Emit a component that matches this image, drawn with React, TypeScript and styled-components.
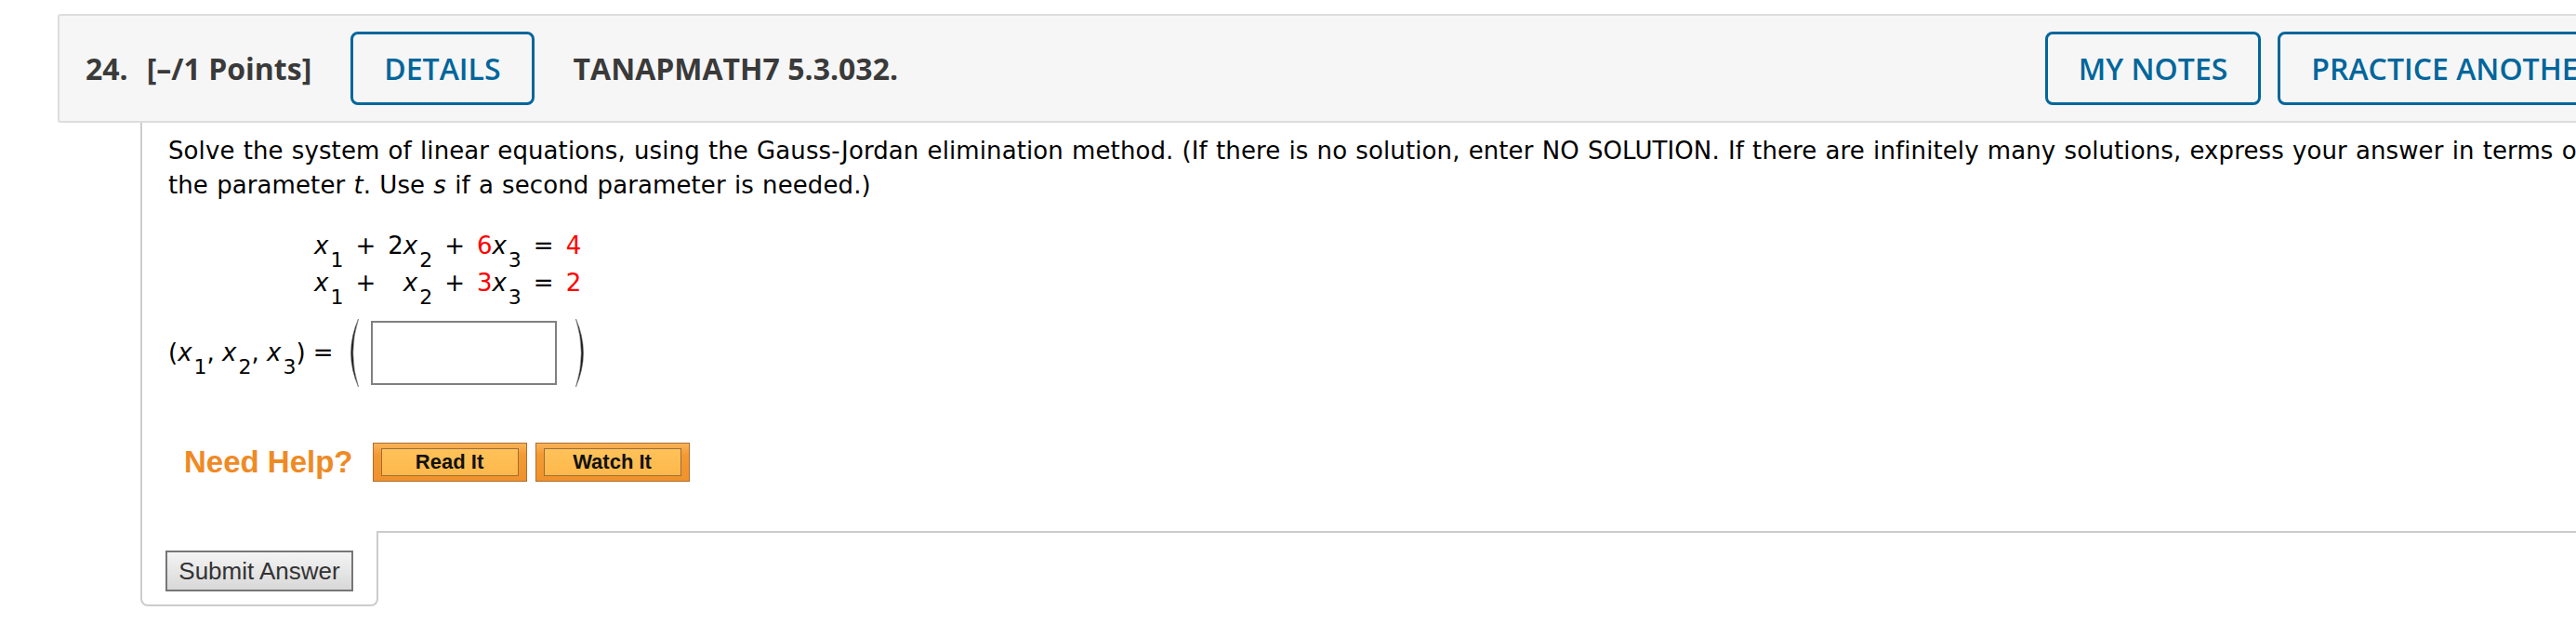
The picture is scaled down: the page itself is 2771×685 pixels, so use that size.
import React from 'react'
import styled, { createGlobalStyle } from 'styled-components'

const GlobalStyle = createGlobalStyle`
  html, body {
    margin: 0;
    background: #fff;
    overflow: hidden;
  }
`

const Page = styled.div`
  padding: 15px 0 0 62px;
  width: 2900px;
`

const Question = styled.section`
  width: 2798px;
`

const Header = styled.header`
  box-sizing: border-box;
  height: 117px;
  display: flex;
  align-items: center;
  padding: 0 28px;
  background: #f6f6f6;
  border: 2px solid #dddddd;
  border-radius: 3px;
  font-family: 'Open Sans', 'Liberation Sans', sans-serif;
  color: #3a3a3a;
`

const HeadText = styled.span<{ $gap?: number }>`
  font-size: 32px;
  font-weight: 700;
  margin-right: ${(p) => p.$gap ?? 0}px;
  white-space: nowrap;
`

const OutlineButton = styled.button`
  box-sizing: border-box;
  height: 79px;
  padding: 0 33px;
  background: transparent;
  border: 3px solid #00669b;
  border-radius: 8px;
  color: #00669b;
  font-family: 'Open Sans', 'Liberation Sans', sans-serif;
  font-size: 32px;
  font-weight: 600;
  white-space: nowrap;
  cursor: pointer;
`

const HeaderRight = styled.div`
  margin-left: auto;
  display: flex;
  gap: 18px;
`

const Body = styled.div`
  margin-left: 89px;
`

const Content = styled.div`
  border-left: 2px solid #cccccc;
  padding: 12px 0 53px 28px;
  font-family: 'DejaVu Sans', Verdana, sans-serif;
  font-size: 26px;
  color: #000;
`

const Prompt = styled.p`
  margin: 0;
  line-height: 37px;
  word-spacing: 0.8px;
  letter-spacing: 0.1px;
`

const System = styled.div`
  margin: 26px 0 0 157px;
  display: inline-grid;
  grid-template-columns: repeat(7, auto);
  grid-auto-rows: 40px;
  align-items: center;
  column-gap: 13px;
  justify-items: end;
`

const Coef = styled.span<{ $red?: boolean }>`
  color: ${(p) => (p.$red ? '#ff0000' : '#000')};
`

const Var = styled.i`
  font-style: italic;
`

const Sub = styled.sub`
  font-size: 22px;
  vertical-align: -14px;
  line-height: 0;
  margin-left: 2px;
`

const AnswerRow = styled.div`
  margin-top: 18px;
  display: flex;
  align-items: center;
  height: 75px;
`

const Label = styled.span`
  white-space: nowrap;
  margin-right: 13px;
`

const Paren = styled.svg<{ $flip?: boolean }>`
  width: 16px;
  height: 75px;
  transform: ${(p) => (p.$flip ? 'scaleX(-1)' : 'none')};
`

const AnswerInput = styled.input`
  box-sizing: border-box;
  width: 200px;
  height: 69px;
  margin: 0 18px 0 11px;
  border: 2px solid #808080;
  background: #fff;
  font-size: 24px;
`

const HelpRow = styled.div`
  margin-top: 59px;
  padding-left: 17px;
  display: flex;
  align-items: center;
  height: 42px;
`

const NeedHelp = styled.span`
  font-family: 'Liberation Sans', Arial, sans-serif;
  font-weight: 700;
  font-size: 33px;
  color: #ef8a24;
  margin-right: 21px;
`

const HelpButton = styled.button`
  box-sizing: border-box;
  width: 166px;
  height: 42px;
  margin-right: 9px;
  padding: 5px 8px;
  border: 1px solid #b06c2c;
  background: linear-gradient(#f9b45a, #f39a33 30%, #f0922c);
  cursor: pointer;

  span {
    box-sizing: border-box;
    display: flex;
    align-items: center;
    justify-content: center;
    height: 100%;
    border: 1px solid #9c6e3a;
    background: linear-gradient(#ffc259, #fdb84b);
    font-family: 'Liberation Sans', Arial, sans-serif;
    font-weight: 700;
    font-size: 22px;
    color: #111;
  }
`

const Footer = styled.div`
  display: flex;
`

const SubmitTab = styled.div`
  padding: 21px 25px 14px 25px;
  border: 2px solid #cccccc;
  border-top: none;
  border-radius: 0 0 8px 8px;
`

const FooterRule = styled.div`
  flex: 1;
  border-top: 2px solid #cccccc;
`

const SubmitButton = styled.button`
  box-sizing: border-box;
  width: 202px;
  height: 44px;
  padding: 0;
  border: 2px solid #767676;
  background: linear-gradient(#f4f4f4, #d8d8d8);
  font-family: 'Liberation Sans', Arial, sans-serif;
  font-size: 26px;
  color: #333;
  cursor: pointer;
`

const X = ({ n }: { n: number }) => (
  <>
    <Var>x</Var>
    <Sub>{n}</Sub>
  </>
)

const ParenShape = ({ flip }: { flip?: boolean }) => (
  <Paren $flip={flip} viewBox="0 0 16 75">
    <path d="M13.5 1 Q-2.5 37.5 13.5 74 Q2 37.5 13.5 1 Z" fill="#1a1a1a" stroke="#666" strokeWidth="0.6" />
  </Paren>
)

const equations = [
  { b: '2', c: '6', rhs: '4' },
  { b: '', c: '3', rhs: '2' },
]

export default function App() {
  return (
    <>
      <GlobalStyle />
      <Page>
        <Question>
          <Header>
            <HeadText $gap={20}>24.</HeadText>
            <HeadText $gap={42}>[–/1 Points]</HeadText>
            <OutlineButton>DETAILS</OutlineButton>
            <HeadText style={{ marginLeft: 42 }}>TANAPMATH7 5.3.032.</HeadText>
            <HeaderRight>
              <OutlineButton>MY NOTES</OutlineButton>
              <OutlineButton>PRACTICE ANOTHER</OutlineButton>
            </HeaderRight>
          </Header>
          <Body>
            <Content>
              <Prompt>
                Solve the system of linear equations, using the Gauss-Jordan elimination method. (If there is no
                solution, enter NO SOLUTION. If there are infinitely many solutions, express your answer in terms of
                <br />
                the parameter <i>t</i>. Use <i>s</i> if a second parameter is needed.)
              </Prompt>
              <System>
                {equations.map((eq, i) => (
                  <React.Fragment key={i}>
                    <span>
                      <X n={1} />
                    </span>
                    <span>+</span>
                    <span>
                      {eq.b && <Coef>{eq.b}</Coef>}
                      <X n={2} />
                    </span>
                    <span>+</span>
                    <span>
                      <Coef $red>{eq.c}</Coef>
                      <X n={3} />
                    </span>
                    <span>=</span>
                    <Coef $red>{eq.rhs}</Coef>
                  </React.Fragment>
                ))}
              </System>
              <AnswerRow>
                <Label>
                  (<X n={1} />, <X n={2} />, <X n={3} />) =
                </Label>
                <ParenShape />
                <AnswerInput type="text" />
                <ParenShape flip />
              </AnswerRow>
              <HelpRow>
                <NeedHelp>Need Help?</NeedHelp>
                <HelpButton>
                  <span>Read It</span>
                </HelpButton>
                <HelpButton>
                  <span>Watch It</span>
                </HelpButton>
              </HelpRow>
            </Content>
            <Footer>
              <SubmitTab>
                <SubmitButton>Submit Answer</SubmitButton>
              </SubmitTab>
              <FooterRule />
            </Footer>
          </Body>
        </Question>
      </Page>
    </>
  )
}
